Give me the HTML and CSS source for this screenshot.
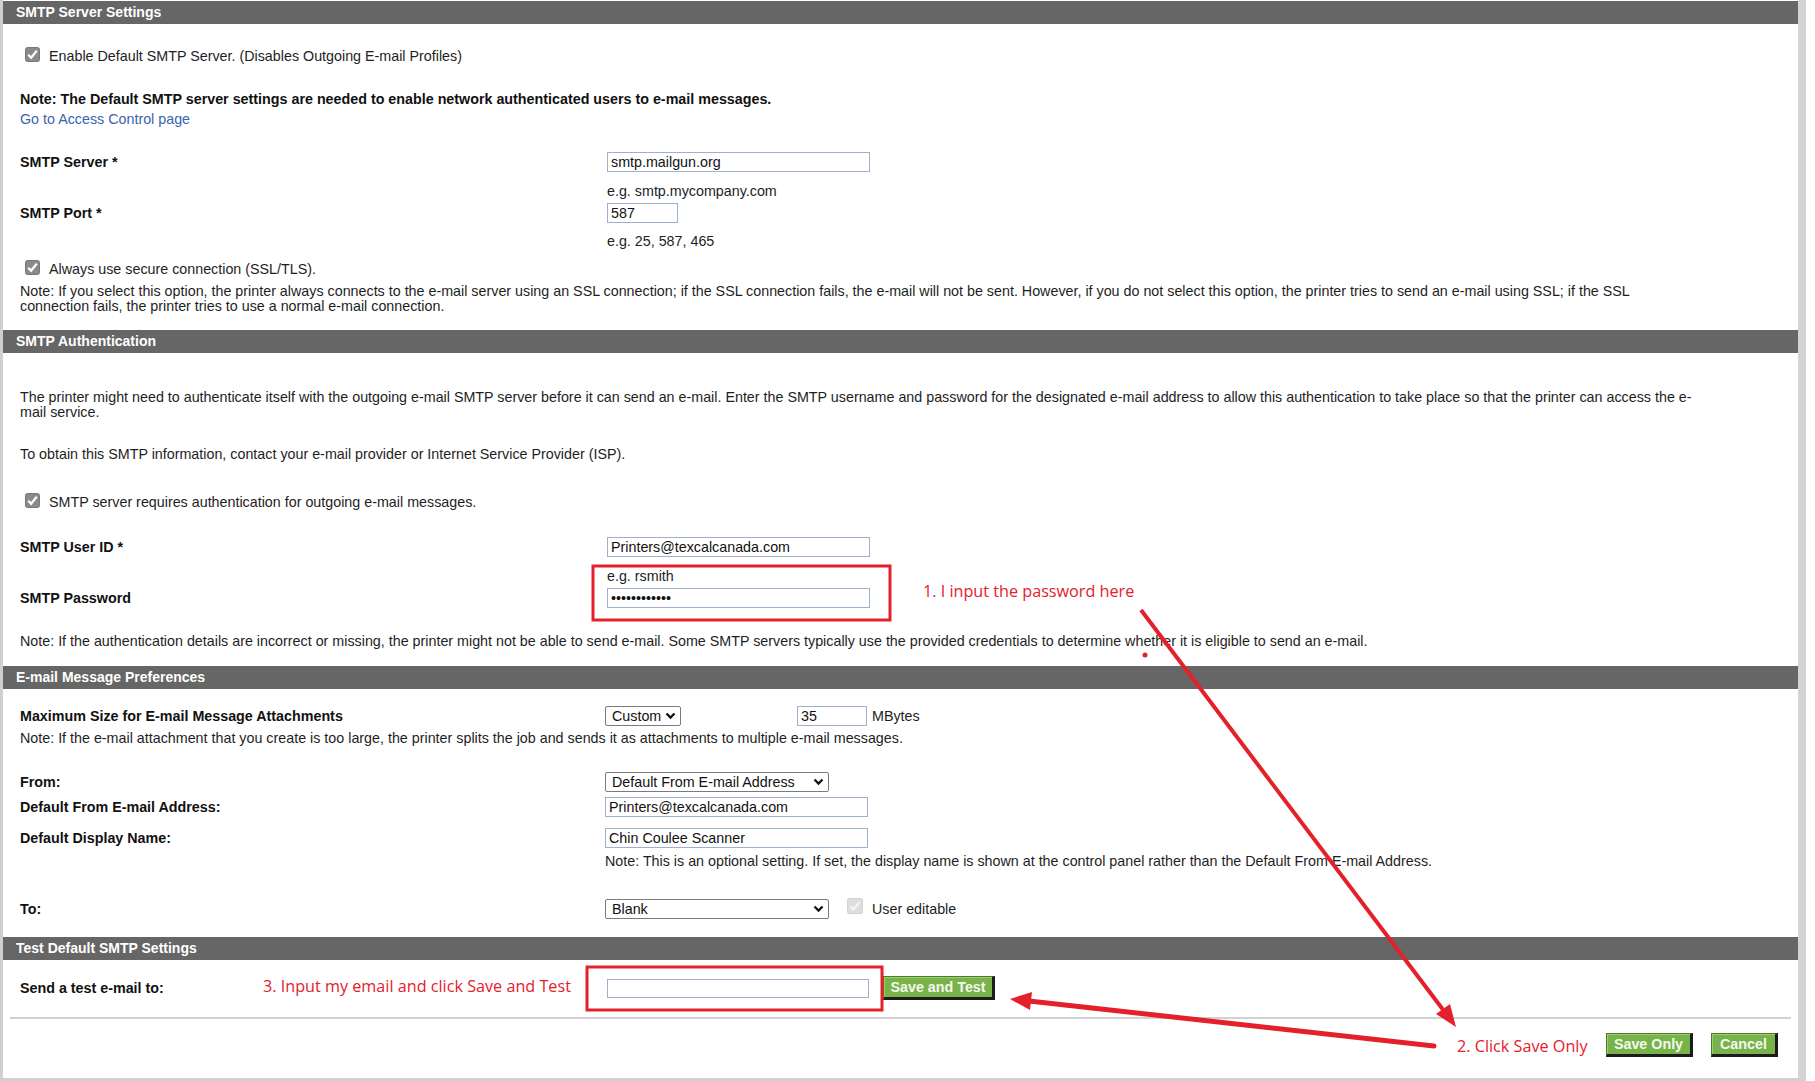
FILE: index.html
```html
<!DOCTYPE html>
<html lang="en">
<head>
    <meta charset="UTF-8">
    <title>SMTP Settings</title>
    <link rel="stylesheet" href="styles.css">
</head>
<body>
<div class="page">
    <div class="frame">

        <div class="section-head">SMTP Server Settings</div>
        <div class="section">
            <label class="check-row mt-22">
                <svg class="cb" viewBox="0 0 15 15"><rect x=".5" y=".5" width="14" height="14" rx="2" fill="#8a8a8a" stroke="#777"/><path d="M3.2 7.8l2.9 3L11.8 3.6" fill="none" stroke="#fff" stroke-width="2.3"/></svg>
                Enable Default SMTP Server. (Disables Outgoing E-mail Profiles)
            </label>
            <div class="note-box mt-23">
                <div class="strong">Note: The Default SMTP server settings are needed to enable network authenticated users to e-mail messages.</div>
                <a class="link" href="#">Go to Access Control page</a>
            </div>

            <div class="field mt-23">
                <div class="label">SMTP Server *</div>
                <div class="control">
                    <input class="text-input" type="text" value="smtp.mailgun.org">
                    <div class="hint mt-9">e.g. smtp.mycompany.com</div>
                </div>
            </div>
            <div class="field mt-2">
                <div class="label">SMTP Port *</div>
                <div class="control">
                    <input class="text-input port" type="text" value="587">
                    <div class="hint mt-8">e.g. 25, 587, 465</div>
                </div>
            </div>

            <label class="check-row mt-8">
                <svg class="cb" viewBox="0 0 15 15"><rect x=".5" y=".5" width="14" height="14" rx="2" fill="#8a8a8a" stroke="#777"/><path d="M3.2 7.8l2.9 3L11.8 3.6" fill="none" stroke="#fff" stroke-width="2.3"/></svg>
                Always use secure connection (SSL/TLS).
            </label>
            <p class="note mt-5">Note: If you select this option, the printer always connects to the e-mail server using an SSL connection; if the SSL connection fails, the e-mail will not be sent. However, if you do not select this option, the printer tries to send an e-mail using SSL; if the SSL connection fails, the printer tries to use a normal e-mail connection.</p>
        </div>

        <div class="section-head mt-16">SMTP Authentication</div>
        <div class="section">
            <p class="note mt-37">The printer might need to authenticate itself with the outgoing e-mail SMTP server before it can send an e-mail. Enter the SMTP username and password for the designated e-mail address to allow this authentication to take place so that the printer can access the e-mail service.</p>
            <p class="note mt-27">To obtain this SMTP information, contact your e-mail provider or Internet Service Provider (ISP).</p>

            <label class="check-row mt-30">
                <svg class="cb" viewBox="0 0 15 15"><rect x=".5" y=".5" width="14" height="14" rx="2" fill="#8a8a8a" stroke="#777"/><path d="M3.2 7.8l2.9 3L11.8 3.6" fill="none" stroke="#fff" stroke-width="2.3"/></svg>
                SMTP server requires authentication for outgoing e-mail messages.
            </label>

            <div class="field mt-25">
                <div class="label">SMTP User ID *</div>
                <div class="control">
                    <input class="text-input" type="text" value="Printers@texcalcanada.com">
                    <div class="hint mt-9">e.g. rsmith</div>
                </div>
            </div>
            <div class="field mt-2">
                <div class="label">SMTP Password</div>
                <div class="control">
                    <input class="text-input" type="password" value="abcdefghijkl">
                </div>
            </div>
            <p class="note mt-26">Note: If the authentication details are incorrect or missing, the printer might not be able to send e-mail. Some SMTP servers typically use the provided credentials to determine whether it is eligible to send an e-mail.</p>
        </div>

        <div class="section-head mt-17">E-mail Message Preferences</div>
        <div class="section prefs">
            <div class="field mt-17">
                <div class="label">Maximum Size for E-mail Message Attachments</div>
                <div class="control inline">
                    <span class="select size-custom">Custom
                        <svg class="chev" viewBox="0 0 11 8"><path d="M1.5 1.5l4 4 4-4" fill="none" stroke="#111" stroke-width="2.3"/></svg>
                    </span>
                    <input class="text-input size-mb" type="text" value="35">
                    <span class="unit">MBytes</span>
                </div>
            </div>
            <p class="note mt-5">Note: If the e-mail attachment that you create is too large, the printer splits the job and sends it as attachments to multiple e-mail messages.</p>

            <div class="field mt-26">
                <div class="label">From:</div>
                <div class="control">
                    <span class="select wide">Default From E-mail Address
                        <svg class="chev" viewBox="0 0 11 8"><path d="M1.5 1.5l4 4 4-4" fill="none" stroke="#111" stroke-width="2.3"/></svg>
                    </span>
                </div>
            </div>
            <div class="field mt-5">
                <div class="label">Default From E-mail Address:</div>
                <div class="control">
                    <input class="text-input" type="text" value="Printers@texcalcanada.com">
                </div>
            </div>
            <div class="field mt-11">
                <div class="label">Default Display Name:</div>
                <div class="control">
                    <input class="text-input" type="text" value="Chin Coulee Scanner">
                    <div class="hint mt-3">Note: This is an optional setting. If set, the display name is shown at the control panel rather than the Default From E-mail Address.</div>
                </div>
            </div>
            <div class="field mt-28">
                <div class="label">To:</div>
                <div class="control inline">
                    <span class="select wide">Blank
                        <svg class="chev" viewBox="0 0 11 8"><path d="M1.5 1.5l4 4 4-4" fill="none" stroke="#111" stroke-width="2.3"/></svg>
                    </span>
                    <svg class="cb cb-off" viewBox="0 0 15 15"><rect x=".5" y=".5" width="14" height="14" rx="2" fill="#dedede" stroke="#d2d2d2"/><path d="M3.2 7.8l2.9 3L11.8 3.6" fill="none" stroke="#f5f5f5" stroke-width="2"/></svg>
                    <span class="unit">User editable</span>
                </div>
            </div>
        </div>

        <div class="section-head mt-18">Test Default SMTP Settings</div>
        <div class="section">
            <div class="field test-row mt-16">
                <div class="label">Send a test e-mail to:</div>
                <div class="control inline">
                    <input class="text-input test-input" type="text" value="">
                    <button class="btn btn-test" type="button">Save and Test</button>
                </div>
            </div>
        </div>

        <div class="divider mt-17"></div>
        <div class="actions mt-14">
            <button class="btn" type="button">Save Only</button>
            <button class="btn" type="button">Cancel</button>
        </div>
    </div>

    <!-- annotations drawn over the screenshot -->
    <svg class="markup" viewBox="0 0 1815 1081">
        <rect x="593" y="566" width="297" height="54" fill="none" stroke="#e4202b" stroke-width="3"/>
        <rect x="587" y="967" width="295" height="43" fill="none" stroke="#e4202b" stroke-width="3"/>
        <line x1="1141" y1="610" x2="1444" y2="1011" stroke="#e4202b" stroke-width="4"/>
        <polygon points="1456,1027 1436,1014 1450,1004" fill="#e4202b"/>
        <line x1="1434" y1="1046" x2="1029" y2="1001" stroke="#e4202b" stroke-width="5" stroke-linecap="round"/>
        <polygon points="1010,999 1032,992 1030,1010" fill="#e4202b"/>
        <circle cx="1145" cy="655" r="2.5" fill="#e4202b"/>
    </svg>
    <span class="callout callout-1">1. I input the password here</span>
    <span class="callout callout-2">2. Click Save Only</span>
    <span class="callout callout-3">3. Input my email and click Save and Test</span>
</div>
</body>
</html>
```

FILE: styles.css
```css
body {
    margin: 0;
    font-family: "Liberation Sans", Arial, sans-serif;
    font-size: 14.3px;
    color: #1e1e1e;
    background: #fff;
}

.page {
    position: relative;
    width: 1815px;
    height: 1081px;
    overflow: hidden;
}

.frame {
    width: 1795px;
    height: 1077px;
    padding-top: 1px;
    border-left: 3px solid #d0d0d0;
    border-right: 8px solid #d4d4d4;
    border-bottom: 3px solid #d0d0d0;
}

.section-head {
    height: 23px;
    line-height: 23px;
    padding-left: 13px;
    background: #666;
    color: #fff;
    font-size: 14px;
    font-weight: bold;
}

.section {
    padding: 0 17px;
}

.prefs .field {
    grid-template-columns: 585px auto;
}

p {
    margin: 0;
}

.check-row {
    display: flex;
    align-items: center;
    gap: 9px;
    height: 20px;
    padding-left: 5px;
}

.cb {
    width: 15px;
    height: 15px;
    flex: none;
    margin-top: -4px;
}

.note-box {
    line-height: 20px;
}

.strong {
    font-weight: bold;
    color: #111;
}

.link {
    color: #3a63b0;
    text-decoration: none;
}

.note {
    line-height: 15px;
    max-width: 1681px;
}

.field {
    display: grid;
    grid-template-columns: 587px auto;
    align-items: start;
}

.label {
    font-weight: bold;
    line-height: 20px;
    color: #111;
}

.control.inline {
    display: flex;
    align-items: center;
}

.hint {
    line-height: 20px;
}

.text-input {
    display: block;
    box-sizing: border-box;
    width: 263px;
    height: 20px;
    margin: 0;
    padding: 0 3px;
    border: 1px solid #9eb0cb;
    border-radius: 0;
    font-family: "Liberation Sans", Arial, sans-serif;
    font-size: 14.3px;
    color: #111;
    outline: none;
}

.text-input.port {
    width: 71px;
}

.text-input.size-mb {
    width: 70px;
    margin-left: 116px;
}

.unit {
    margin-left: 5px;
}

.select {
    display: inline-flex;
    align-items: center;
    justify-content: space-between;
    box-sizing: border-box;
    height: 20px;
    padding: 0 4px 0 6px;
    border: 1px solid #7b7b7b;
    border-radius: 2px;
    color: #111;
}

.select.size-custom {
    width: 76px;
}

.select.wide {
    width: 224px;
}

.chev {
    width: 11px;
    height: 8px;
}

.cb-off {
    width: 16px;
    height: 16px;
    margin-left: 18px;
    margin-top: -6px;
}

.control.inline .cb-off + .unit {
    margin-left: 9px;
}

.test-row {
    align-items: center;
}

.test-row .label {
    line-height: 24px;
}

.test-input {
    width: 262px;
    height: 19px;
}

.btn {
    box-sizing: border-box;
    height: 24px;
    padding: 0;
    background: #78b34a;
    color: #f4f8ee;
    font-family: "Liberation Sans", Arial, sans-serif;
    font-size: 14.3px;
    font-weight: bold;
    white-space: nowrap;
    border: 1px solid #4d7a30;
    border-right: 3px solid #1c1c1c;
    border-bottom: 3px solid #1c1c1c;
    box-shadow: inset 1px 1px 0 #9bcf6d;
    cursor: pointer;
}

.btn-test {
    width: 112px;
    margin-left: 14px;
}

.divider {
    margin-left: 7px;
    margin-right: 7px;
    border-top: 2px solid #d2d2d2;
}

.actions {
    display: flex;
    justify-content: flex-end;
    gap: 18px;
    padding-right: 20px;
}

.actions .btn:first-child {
    width: 87px;
}

.actions .btn:last-child {
    width: 67px;
}

.markup {
    position: absolute;
    left: 0;
    top: 0;
    width: 1815px;
    height: 1081px;
    pointer-events: none;
}

.callout {
    position: absolute;
    font-family: "Open Sans", "Noto Sans", sans-serif;
    font-size: 16.2px;
    line-height: 22px;
    color: #e4202b;
    white-space: nowrap;
}

.callout-1 { left: 923px; top: 580px; }
.callout-2 { left: 1457px; top: 1035px; }
.callout-3 { left: 263px; top: 975px; }

.mt-2 { margin-top: 2px; }
.mt-3 { margin-top: 3px; }
.mt-5 { margin-top: 5px; }
.mt-8 { margin-top: 8px; }
.mt-9 { margin-top: 9px; }
.mt-11 { margin-top: 11px; }
.mt-14 { margin-top: 14px; }
.mt-16 { margin-top: 16px; }
.mt-17 { margin-top: 17px; }
.mt-18 { margin-top: 18px; }
.mt-22 { margin-top: 22px; }
.mt-23 { margin-top: 23px; }
.mt-25 { margin-top: 25px; }
.mt-26 { margin-top: 26px; }
.mt-27 { margin-top: 27px; }
.mt-28 { margin-top: 28px; }
.mt-30 { margin-top: 30px; }
.mt-37 { margin-top: 37px; }
```
